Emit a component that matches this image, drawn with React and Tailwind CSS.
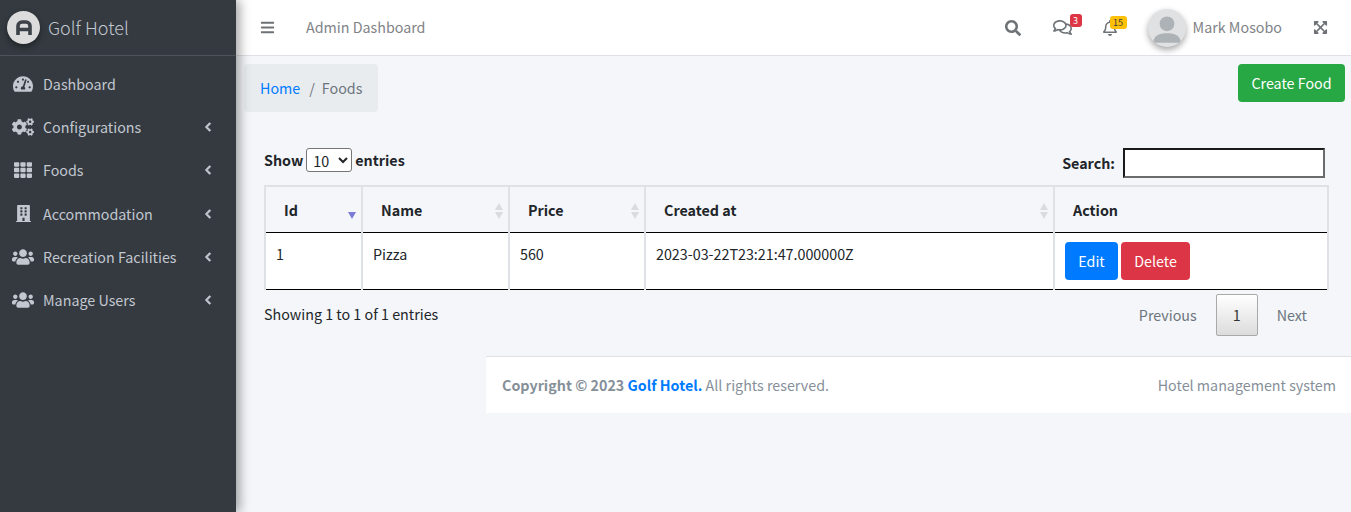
import React from 'react';
import {
    FaTachometerAlt, FaCogs, FaTh, FaBuilding, FaUsers, FaChevronLeft, FaBars, FaSearch,
    FaRegComments, FaRegBell, FaExpandArrowsAlt,
} from 'react-icons/fa';

const menu = [
    { label: 'Dashboard', icon: FaTachometerAlt, size: 'text-[20px]' },
    { label: 'Configurations', icon: FaCogs, size: 'text-[22px]', arrow: true },
    { label: 'Foods', icon: FaTh, size: 'text-[18px]', arrow: true },
    { label: 'Accommodation', icon: FaBuilding, size: 'text-[17px]', arrow: true },
    { label: 'Recreation Facilities', icon: FaUsers, size: 'text-[22px]', arrow: true },
    { label: 'Manage Users', icon: FaUsers, size: 'text-[22px]', arrow: true },
];

const SortArrows = ({ active }) => (
    <span className="absolute right-[5px] top-[16px] flex flex-col gap-[2px]">
        <span className={`w-0 h-0 border-x-[4px] border-x-transparent border-b-[7px] ${active ? 'border-b-transparent' : 'border-b-[#d9dbe0]'}`}></span>
        <span className={`w-0 h-0 border-x-[4px] border-x-transparent border-t-[7px] ${active ? 'border-t-[#7b7bd8]' : 'border-t-[#d9dbe0]'}`}></span>
    </span>
);

const Sidebar = () => (
    <aside className="w-[236px] shrink-0 min-h-screen bg-[#343a40] shadow-[4px_0_10px_rgba(0,0,0,0.35)] z-10">
        <div className="h-[56px] flex items-center pl-[7px] gap-[8px] border-b border-[#4b545c]">
            <div className="w-[33px] h-[33px] rounded-full bg-[#dcdcdc] flex items-center justify-center shadow-[0_3px_6px_rgba(0,0,0,0.4)]">
                <svg width="16" height="15" viewBox="0 0 16 15">
                    <path d="M2 15V6a4 4 0 0 1 4-4h4a4 4 0 0 1 4 4v9M2 9.5h12" fill="none" stroke="#3c4248" strokeWidth="3.6" />
                </svg>
            </div>
            <span className="text-[18px] font-light text-[#c2c7d0] -mt-[1px]">Golf Hotel</span>
        </div>
        <nav className="pt-[6px]">
            {menu.map((item) => (
                <div key={item.label} className="h-[43.35px] flex items-center text-[#c2c7d0]">
                    <span className={`w-[22px] ml-[12px] mr-[9px] flex justify-center shrink-0 ${item.size}`}>
                        <item.icon />
                    </span>
                    <span className="text-[14.3px] leading-none">{item.label}</span>
                    {item.arrow && <FaChevronLeft className="ml-auto mr-[23px] text-[10px] stroke-current stroke-[40]" />}
                </div>
            ))}
        </nav>
    </aside>
);

const Header = () => (
    <header className="h-[56px] bg-white border-b border-[#dee2e6] flex items-center text-[#6e7276]">
        <FaBars className="ml-[24px] text-[15px]" />
        <span className="ml-[31px] text-[14.3px] text-[#7f8387] -mt-[1px]">Admin Dashboard</span>
        <FaSearch className="ml-auto text-[16px]" />
        <div className="relative ml-[32px]">
            <FaRegComments className="text-[19px]" />
            <span className="absolute -top-[4px] left-[17px] w-[12px] h-[13px] rounded-[3px] bg-[#dc3545] text-white text-[9px] leading-[13px] text-center">3</span>
        </div>
        <div className="relative ml-[30px]">
            <FaRegBell className="text-[16px]" />
            <span className="absolute -top-[4px] left-[8px] w-[17px] h-[13px] rounded-[3px] bg-[#ffc107] text-[#343a40] text-[9px] leading-[13px] text-center">15</span>
        </div>
        <div className="ml-[30px] w-[38px] h-[38px] rounded-full bg-[#dfe1e3] overflow-hidden shadow-[0_3px_6px_rgba(0,0,0,0.35)]">
            <svg width="38" height="38" viewBox="0 0 36 36">
                <circle cx="18" cy="14" r="7" fill="#adb2b6" />
                <path d="M5 32c0-7 6-9 13-9s13 2 13 9z" fill="#adb2b6" />
            </svg>
        </div>
        <span className="ml-[7px] text-[14.3px] text-[#7f8387] -mt-[1px]">Mark Mosobo</span>
        <FaExpandArrowsAlt className="ml-[31px] mr-[23px] text-[15px]" />
    </header>
);

const thClass = 'relative border-x-2 border-t-2 border-[#dee2e6] border-b border-b-black pl-[18px] text-left font-bold';
const tdClass = 'border-x-2 border-[#dee2e6] border-b border-b-black pl-[10px] pt-[10px]';

const FoodsTable = () => (
    <table className="ml-[28px] w-[1065px] table-fixed border-collapse text-[14.3px] text-[#212529]">
        <thead>
            <tr className="h-[46px]">
                <th className={`w-[97px] ${thClass}`}>Id<SortArrows active /></th>
                <th className={`w-[147px] ${thClass}`}>Name<SortArrows /></th>
                <th className={`w-[136px] ${thClass}`}>Price<SortArrows /></th>
                <th className={`w-[409px] ${thClass}`}>Created at<SortArrows /></th>
                <th className={thClass}>Action</th>
            </tr>
        </thead>
        <tbody className="bg-white">
            <tr className="h-[57px] align-top">
                <td className={tdClass}>1</td>
                <td className={tdClass}>Pizza</td>
                <td className={tdClass}>560</td>
                <td className={tdClass}>2023-03-22T23:21:47.000000Z</td>
                <td className="border-x-2 border-[#dee2e6] border-b border-b-black pl-[10px] pt-[9px]">
                    <div className="flex gap-[3px]">
                        <button className="w-[53px] h-[38px] rounded bg-[#007bff] text-white">Edit</button>
                        <button className="w-[69px] h-[38px] rounded bg-[#dc3545] text-white">Delete</button>
                    </div>
                </td>
            </tr>
        </tbody>
    </table>
);

const App = () => (
    <div className="flex min-h-screen bg-[#f4f6f9] overflow-hidden text-[#212529] font-['Noto_Sans_CJK_JP',sans-serif]">
        <Sidebar />
        <main className="flex-1 min-w-0">
            <Header />
            <div className="flex justify-between items-start pt-[8px] pl-[8px] pr-[6px]">
                <div className="h-[48px] w-[134px] rounded bg-[#e9ecef] flex items-center pl-[16px] text-[14.3px]">
                    <span className="text-[#007bff]">Home</span>
                    <span className="ml-[9px] mr-[7px] text-[#6c757d]">/</span>
                    <span className="text-[#6c757d]">Foods</span>
                </div>
                <button className="w-[107px] h-[38px] rounded bg-[#28a745] text-white text-[14.3px]">Create Food</button>
            </div>
            <div className="flex justify-between items-center h-[38px] mt-[32px] ml-[28px] mr-[26px] text-[14.3px] font-bold">
                <div className="flex items-center gap-[3px] -mt-[6px]">
                    Show
                    <select className="w-[46px] h-[24px] border border-[#767676] rounded-[3px] bg-white font-normal text-[14.3px] pl-[2px]" defaultValue="10">
                        <option>10</option>
                    </select>
                    entries
                </div>
                <div className="flex items-center gap-[8px]">
                    Search:
                    <input className="w-[202px] h-[30px] bg-white border-2 border-t-[#1a1a1a] border-l-[#1a1a1a] border-r-[#6b6b6b] border-b-[#6b6b6b]" />
                </div>
            </div>
            <div className="mt-[3px]"><FoodsTable /></div>
            <div className="flex justify-between ml-[28px] mt-[4px] text-[14.3px]">
                <span className="mt-[9px]">Showing 1 to 1 of 1 entries</span>
                <div className="flex items-center text-[#6c757d]">
                    <span className="mr-[19px]">Previous</span>
                    <span className="w-[42px] h-[42px] flex items-center justify-center rounded-[2px] border border-[#a9a9a9] bg-gradient-to-b from-white to-[#dcdcdc] text-[#333]">1</span>
                    <span className="ml-[19px] mr-[44px]">Next</span>
                </div>
            </div>
            <footer className="ml-[250px] mt-[20px] h-[57px] bg-white border-t border-[#dee2e6] flex items-center justify-between pl-[16px] pr-[15px] text-[#869099] text-[14.3px]">
                <span><strong className="font-bold">Copyright © 2023 <span className="text-[#007bff]">Golf Hotel.</span></strong> All rights reserved.</span>
                <span>Hotel management system</span>
            </footer>
        </main>
    </div>
);

export default App;
